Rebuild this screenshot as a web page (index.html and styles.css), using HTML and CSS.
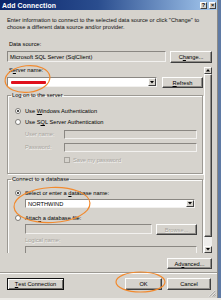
FILE: index.html
```html
<!DOCTYPE html>
<html lang="en">
<head>
<meta charset="utf-8">
<title>Add Connection</title>
<link rel="stylesheet" href="styles.css">
</head>
<body>
<div class="screen">
  <div class="window">
    <div class="titlebar">
      <span class="title">Add Connection</span>
      <span class="caption-btns">
        <span class="cbtn">?</span>
        <span class="cbtn">×</span>
      </span>
    </div>
    <div class="main">
      <p class="intro">Enter information to connect to the selected data source or click "Change" to<br>choose a different data source and/or provider.</p>
      <div class="lbl ds-lbl">Data source:</div>
      <div class="row ds-row">
        <div class="tb ro">Microsoft SQL Server (SqlClient)</div>
        <div class="btn btn-change">C<u>h</u>ange...</div>
      </div>
      <div class="panel">
        <div class="pcontent">
          <div class="lbl">S<u>e</u>rver name:</div>
          <div class="row srv-row">
            <div class="combo srv-combo">
              <span class="cval"><span class="redact"></span></span>
              <span class="dd"><svg width="4" height="3" viewBox="0 0 4 3"><polygon points="0,0 4,0 2,2.5" fill="#000"/></svg></span>
            </div>
            <div class="btn btn-refresh"><u>R</u>efresh</div>
          </div>
          <fieldset class="grp logon">
            <legend>Log on to the server</legend>
            <div class="opt first"><span class="radio on"></span><span>Use <u>W</u>indows Authentication</span></div>
            <div class="opt"><span class="radio"></span><span>Use S<u>Q</u>L Server Authentication</span></div>
            <div class="field first-field"><span class="dis">User name:</span><span class="tb dtb"></span></div>
            <div class="field"><span class="dis">Password:</span><span class="tb dtb"></span></div>
            <div class="chk"><span class="cbox"></span><span class="dis">Save my password</span></div>
          </fieldset>
          <fieldset class="grp conn">
            <legend>Connect to a database</legend>
            <div class="opt sel"><span class="radio on"></span><span>Select or enter a <u>d</u>atabase name:</span></div>
            <div class="combo db-combo">
              <span class="cval">NORTHWIND</span>
              <span class="dd"><svg width="4" height="3" viewBox="0 0 4 3"><polygon points="0,0 4,0 2,2.5" fill="#000"/></svg></span>
            </div>
            <div class="opt att"><span class="radio"></span><span>Attac<u>h</u> a database file:</span></div>
            <div class="row att-row"><span class="tb dtb att-tb"></span><span class="btn dis-btn">Browse...</span></div>
            <div class="dis sub-lbl">Logical name:</div>
            <div class="tb dtb logical"></div>
          </fieldset>
        </div>
        <div class="sbar">
          <div class="sb-btn"><svg width="4" height="3" viewBox="0 0 4 3"><polygon points="0,2.5 4,2.5 2,0" fill="#000"/></svg></div>
          <div class="sb-thumb"></div>
          <div class="sb-track"></div>
          <div class="sb-btn"><svg width="4" height="3" viewBox="0 0 4 3"><polygon points="0,0 4,0 2,2.5" fill="#000"/></svg></div>
        </div>
      </div>
      <div class="adv-row"><div class="btn btn-adv">Ad<u>v</u>anced...</div></div>
    </div>
    <div class="sep"></div>
    <div class="footer">
      <div class="btn btn-test"><u>T</u>est Connection</div>
      <div class="spacer"></div>
      <div class="btn btn-ok">OK</div>
      <div class="btn btn-cancel">Cancel</div>
    </div>
    <svg class="grip" width="8" height="8" viewBox="0 0 8 8">
      <line x1="7.5" y1="1" x2="1" y2="7.5" stroke="#fff" stroke-width="0.6"/>
      <line x1="7.5" y1="1.7" x2="1.7" y2="7.5" stroke="#888" stroke-width="0.7"/>
      <line x1="7.5" y1="3.8" x2="3.8" y2="7.5" stroke="#fff" stroke-width="0.6"/>
      <line x1="7.5" y1="4.5" x2="4.5" y2="7.5" stroke="#888" stroke-width="0.7"/>
      <line x1="7.5" y1="6.3" x2="6.3" y2="7.5" stroke="#888" stroke-width="0.7"/>
    </svg>
    <svg class="marks" width="218" height="298" viewBox="0 0 218 298">
      <ellipse cx="27.5" cy="79" rx="22.5" ry="13.3" transform="rotate(-6 27.5 79)" fill="none" stroke="#f28a2e" stroke-width="1.2"/>
      <ellipse cx="52" cy="205" rx="38" ry="17.5" transform="rotate(-3 52 205)" fill="none" stroke="#f28a2e" stroke-width="1.2"/>
      <ellipse cx="140.5" cy="282" rx="24.5" ry="10" fill="none" stroke="#f28a2e" stroke-width="1.2"/>
    </svg>
  </div>
  <div class="desk"></div>
</div>
</body>
</html>
```

FILE: styles.css
```css
* { box-sizing: border-box; }
html, body { margin: 0; padding: 0; }
body {
  width: 221px;
  height: 300px;
  overflow: hidden;
  background: #eceae6;
  font-family: "Liberation Sans", Arial, sans-serif;
  font-size: 5.7px;
  color: #000;
}
u { text-decoration-thickness: 0.5px; text-underline-offset: 0.5px; }

.screen { display: flex; height: 298px; }
.desk { width: 3px; background: #5f7aa4; }

.window {
  position: relative;
  width: 218px;
  height: 298px;
  background: #d6d3cd;
  display: flex;
  flex-direction: column;
  border-right: 1px solid #8c8a86;
}

.titlebar {
  height: 10px;
  flex: none;
  background: linear-gradient(90deg, #0a246a 0%, #2a4d8e 45%, #a6caf0 100%);
  display: flex;
  align-items: center;
  justify-content: space-between;
  padding: 0 1px 0 2px;
}
.title { color: #fff; font-weight: bold; font-size: 6.9px; letter-spacing: 0.05px; }
.caption-btns { display: flex; gap: 2px; align-self: flex-start; margin-top: 2px; }
.cbtn {
  width: 7px; height: 7px;
  background: #d6d3cd;
  border: 1px solid; border-color: #fff #404040 #404040 #fff;
  font-size: 5.5px; font-weight: bold; line-height: 5px;
  display: flex; align-items: center; justify-content: center;
  color: #000;
}

.main { padding: 0 5px 0 7px; display: flex; flex-direction: column; }

.intro { margin: 7px 0 0; line-height: 7px; white-space: nowrap; color: #111; }
.lbl { line-height: 7px; height: 7px; margin-left: 2px; }
.ds-lbl { margin-top: 10px; }

.row { display: flex; align-items: flex-start; }
.ds-row { margin-top: 3px; gap: 4px; }

.tb {
  display: flex; align-items: center;
  background: #fff;
  border: 1px solid; border-color: #8a8782 #f2f1ef #f2f1ef #8a8782;
  padding-left: 2px;
  white-space: nowrap;
  overflow: hidden;
}
.ro { flex: 1; height: 11px; background: #d6d3cd; }
.dtb { background: #d6d3cd; height: 9px; }

.btn {
  display: flex; align-items: center; justify-content: center;
  background: #d6d3cd;
  border: 1px solid; border-color: #fdfdfc #3f3f3f #3f3f3f #fdfdfc;
  box-shadow: inset -1px -1px #8e8c88;
  white-space: nowrap;
  color: #000;
}
.btn-change { width: 42px; height: 12px; }

.panel { margin-top: 4px; height: 186px; display: flex; }
.pcontent { flex: 1; overflow: hidden; display: flex; flex-direction: column; }

.srv-row { margin-top: 3px; gap: 5px; padding-right: 1px; }
.combo {
  display: flex; align-items: stretch;
  background: #fff;
  border: 1px solid; border-color: #8a8782 #f2f1ef #f2f1ef #8a8782;
}
.srv-combo { flex: 1; height: 10px; }
.cval { flex: 1; display: flex; align-items: center; padding-left: 2px; white-space: nowrap; }
.redact { display: block; width: 35px; height: 3px; background: #e0101c; border-radius: 1px; margin-left: 1px; margin-top: 1px; }
.dd {
  width: 8px;
  background: #d6d3cd;
  border: 1px solid; border-color: #fdfdfc #3f3f3f #3f3f3f #fdfdfc;
  display: flex; align-items: center; justify-content: center;
}
.btn-refresh { width: 41px; height: 11px; }

.grp {
  margin: 4px 1px 0 0;
  padding: 0 5px 9px 4px;
  border: 1px solid #9c9993;
  box-shadow: 1px 1px 0 #fbfbfa, inset 1px 1px 0 #fbfbfa;
  min-inline-size: 0;
  display: flex; flex-direction: column;
}
.grp legend { padding: 0 1px; margin-left: -1px; line-height: 7px; height: 7px; }
.conn { margin-top: 2px; padding-bottom: 20px; }

.opt { display: flex; align-items: center; gap: 4px; height: 8px; margin: 3px 0 0 3px; white-space: nowrap; }
.opt.first { margin-top: 8px; }
.opt.sel { margin-top: 6px; }
.opt.att { margin-top: 6px; }
.radio {
  width: 6px; height: 6px; border-radius: 50%;
  background: #fff;
  border: 1px solid #7d7b77;
  display: flex; align-items: center; justify-content: center;
  flex: none;
}
.radio.on::after { content: ""; width: 2px; height: 2px; border-radius: 50%; background: #111; }

.dis { color: #a6a39d; text-shadow: 0.5px 0.5px 0 #f6f6f4; white-space: nowrap; }

.field { display: grid; grid-template-columns: 39px 1fr; align-items: center; padding-left: 13px; margin-top: 4px; }
.field .dis { line-height: 9px; }

.chk { display: flex; align-items: center; gap: 3px; margin: 4px 0 0 52px; height: 8px; }
.cbox { width: 6px; height: 6px; border: 1px solid #a6a39d; background: #d6d3cd; flex: none; }

.db-combo { margin: 2px 2px 0 13px; height: 9px; }

.att-row { margin: 2px 0 0 13px; gap: 4px; }
.att-tb { flex: 1; height: 10px; }
.dis-btn { width: 41px; height: 11px; color: #a6a39d; text-shadow: 0.5px 0.5px 0 #f6f6f4; }
.sub-lbl { margin: 2px 0 0 13px; line-height: 7px; height: 7px; }
.logical { margin: 2px 0 0 13px; height: 9px; flex: none; }

.sbar { width: 8px; display: flex; flex-direction: column; }
.sb-btn {
  height: 7px; flex: none;
  background: #d6d3cd;
  border: 1px solid; border-color: #fdfdfc #3f3f3f #3f3f3f #fdfdfc;
  display: flex; align-items: center; justify-content: center;
}
.sb-thumb {
  height: 163px; flex: none;
  background: #d6d3cd;
  border: 1px solid; border-color: #fdfdfc #3f3f3f #3f3f3f #fdfdfc;
  box-shadow: inset -1px -1px #8e8c88;
}
.sb-track { flex: 1; background: #efeeec; }

.adv-row { display: flex; justify-content: flex-end; margin-top: 5px; }
.btn-adv { width: 45px; height: 11px; }

.sep { margin-top: 3px; height: 2px; border-top: 1px solid #9c9993; border-bottom: 1px solid #fbfbfa; }

.footer { display: flex; margin-top: 4px; padding: 0 6px 0 7px; gap: 5px; }
.spacer { flex: 1; }
.btn-test {
  width: 57px; height: 12px;
  border: 1px solid #111;
  box-shadow: inset 1px 1px #fdfdfc, inset -1px -1px #6e6c68;
}
.btn-ok { width: 37px; height: 12px; }
.btn-cancel { width: 44px; height: 12px; }

.grip { position: absolute; right: 1px; bottom: 1px; }
.marks { position: absolute; left: 0; top: 0; pointer-events: none; }
```
